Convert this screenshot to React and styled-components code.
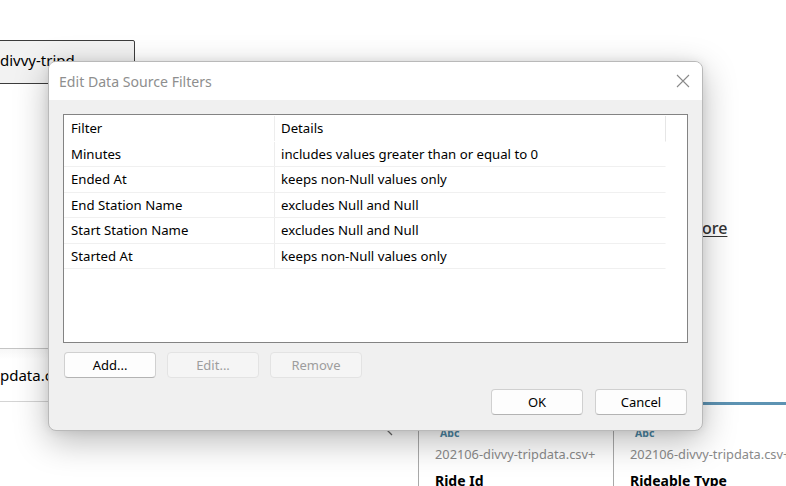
import React from "react";
import styled, { createGlobalStyle } from "styled-components";

const GlobalStyle = createGlobalStyle`
  html, body {
    margin: 0;
    padding: 0;
    background: #ffffff;
  }
  body {
    font-family: "Noto Sans", "Open Sans", sans-serif;
    color: #000;
  }
`;

const Page = styled.div`
  position: relative;
  width: 786px;
  height: 486px;
  overflow: hidden;
  background: #ffffff;
`;

/* ---------- background workbook page ---------- */

const Backdrop = styled.div`
  display: flex;
  flex-direction: column;
  height: 100%;
`;

const TabRow = styled.div`
  display: flex;
  padding-top: 40px;
  margin-left: -12px;
`;

const SourceTab = styled.div`
  width: 147px;
  height: 44px;
  box-sizing: border-box;
  border: 1px solid #3c3c3c;
  border-radius: 2px;
  background: #f2f2f2;
  display: flex;
  align-items: flex-start;
  padding: 9px 0 0 11px;
  font-size: 15px;
  white-space: nowrap;
  overflow: hidden;
`;

const LinkRow = styled.div`
  display: flex;
  padding-left: 702px;
  margin-top: 133px;
  height: 24px;
  align-items: center;
`;

const MoreLink = styled.a`
  font-size: 16px;
  color: #333;
  text-decoration: underline;
  text-underline-offset: 2px;
  font-weight: 500;
  white-space: nowrap;
`;

const ConnectionRow = styled.div`
  display: flex;
  margin-top: 109px;
  margin-left: -40px;
`;

const ConnectionBox = styled.div`
  width: 140px;
  height: 54px;
  box-sizing: border-box;
  border-top: 1px solid #c4c4c4;
  border-bottom: 1px solid #d4d4d4;
  background: linear-gradient(#f7f7f7, #ffffff 20%);
  font-size: 15px;
  display: flex;
  align-items: center;
  padding: 0 0 0 40px;
  white-space: nowrap;
`;

const GridArea = styled.div`
  display: flex;
  flex: 1;
`;

const GridGutter = styled.div`
  width: 418px;
  flex-shrink: 0;
  display: flex;
  justify-content: flex-end;
  align-items: flex-start;
  padding-top: 24px;
  padding-right: 24px;
  box-sizing: border-box;
`;

const GridColumns = styled.div`
  flex: 1;
  min-width: 0;
  display: flex;
  overflow: hidden;
  border-top: 3px solid #5d93b3;
`;

const Column = styled.div`
  width: ${(p) => p.width}px;
  flex-shrink: 0;
  border-left: 1px solid #a9a9a9;
  padding: 21px 0 0 16px;
  box-sizing: border-box;
  display: flex;
  flex-direction: column;
  white-space: nowrap;
  overflow: hidden;
`;

const TypeTag = styled.span`
  font-size: 10.5px;
  font-weight: 700;
  color: #4c86a3;
  padding-left: 5px;
  line-height: 14px;
`;

const SourceName = styled.span`
  font-size: 12.8px;
  color: #8a8a8a;
  margin-top: 6px;
  line-height: 17px;
`;

const FieldName = styled.span`
  font-size: 14px;
  font-weight: 700;
  margin-top: 8px;
`;

/* ---------- dialog ---------- */

const Dialog = styled.div`
  position: absolute;
  left: 48px;
  top: 61px;
  width: 655px;
  height: 370px;
  box-sizing: border-box;
  border: 1px solid #b9b9b9;
  border-radius: 8px;
  overflow: hidden;
  background: #f0f0f0;
  box-shadow: 0 10px 34px rgba(0, 0, 0, 0.28), 0 0 10px rgba(0, 0, 0, 0.08);
  display: flex;
  flex-direction: column;
`;

const TitleBar = styled.div`
  height: 38px;
  background: #ffffff;
  display: flex;
  align-items: center;
  justify-content: space-between;
  padding: 0 12px 0 10px;
`;

const Title = styled.span`
  font-size: 14.1px;
  color: #8e8e8e;
`;

const CloseIcon = styled.svg`
  width: 14px;
  height: 14px;
`;

const Body = styled.div`
  flex: 1;
  display: flex;
  flex-direction: column;
  padding: 14px 14px 0 14px;
`;

const ListView = styled.div`
  height: 229px;
  box-sizing: border-box;
  border: 1px solid #838383;
  background: #ffffff;
  padding: 1px 0 0 0;
`;

const Table = styled.div`
  width: 602px;
  display: flex;
  flex-direction: column;
`;

const Row = styled.div`
  display: grid;
  grid-template-columns: 210px 1fr;
  height: 25.5px;
  align-items: center;
  border-bottom: 1px solid ${(p) => (p.header ? "transparent" : "#f0f0f0")};
  border-right: 1px solid ${(p) => (p.header ? "#e6e6e6" : "transparent")};
  box-sizing: border-box;
  font-size: 13.2px;
`;

const Cell = styled.div`
  height: 100%;
  display: flex;
  align-items: center;
  padding-left: 6px;
  white-space: nowrap;
  box-sizing: border-box;
  border-left: 1px solid ${(p) => (p.divider ? "#ededed" : "transparent")};
`;

const ButtonRow = styled.div`
  display: flex;
  gap: 11px;
  margin-top: 9px;
  padding-left: 1px;
`;

const FooterRow = styled.div`
  display: flex;
  justify-content: flex-end;
  gap: 12px;
  margin-top: 11px;
  padding-right: 1px;
`;

const Button = styled.button`
  width: 92px;
  height: 26px;
  box-sizing: border-box;
  border-radius: 4px;
  font-family: inherit;
  font-size: 13px;
  padding: 0;
  border: 1px solid ${(p) => (p.disabled ? "#e3e3e3" : "#d0d0d0")};
  border-bottom-color: ${(p) => (p.disabled ? "#e3e3e3" : "#b3b3b3")};
  background: ${(p) => (p.disabled ? "#f5f5f5" : "#fdfdfd")};
  color: ${(p) => (p.disabled ? "#9d9d9d" : "#000")};
`;

const filters = [
  ["Minutes", "includes values greater than or equal to 0"],
  ["Ended At", "keeps non-Null values only"],
  ["End Station Name", "excludes Null and Null"],
  ["Start Station Name", "excludes Null and Null"],
  ["Started At", "keeps non-Null values only"],
];

export default function App() {
  return (
    <Page>
      <GlobalStyle />
      <Backdrop>
        <TabRow>
          <SourceTab>divvy-tripd</SourceTab>
        </TabRow>
        <LinkRow>
          <MoreLink>ore</MoreLink>
        </LinkRow>
        <ConnectionRow>
          <ConnectionBox>pdata.c</ConnectionBox>
        </ConnectionRow>
        <GridArea>
          <GridGutter>
            <svg width="8" height="10" viewBox="0 0 8 10">
              <path d="M6 1 L2 5 L6 9" fill="none" stroke="#666" strokeWidth="1.3" />
            </svg>
          </GridGutter>
          <GridColumns>
            <Column width={195}>
              <TypeTag>Abc</TypeTag>
              <SourceName>202106-divvy-tripdata.csv+</SourceName>
              <FieldName>Ride Id</FieldName>
            </Column>
            <Column width={180}>
              <TypeTag>Abc</TypeTag>
              <SourceName>202106-divvy-tripdata.csv+</SourceName>
              <FieldName>Rideable Type</FieldName>
            </Column>
          </GridColumns>
        </GridArea>
      </Backdrop>

      <Dialog>
        <TitleBar>
          <Title>Edit Data Source Filters</Title>
          <CloseIcon viewBox="0 0 14 14">
            <path d="M1 1 L13 13 M13 1 L1 13" stroke="#8a8a8a" strokeWidth="1.1" />
          </CloseIcon>
        </TitleBar>
        <Body>
          <ListView>
            <Table>
              <Row header>
                <Cell>Filter</Cell>
                <Cell divider>Details</Cell>
              </Row>
              {filters.map(([name, detail]) => (
                <Row key={name}>
                  <Cell>{name}</Cell>
                  <Cell divider>{detail}</Cell>
                </Row>
              ))}
            </Table>
          </ListView>
          <ButtonRow>
            <Button>Add...</Button>
            <Button disabled>Edit...</Button>
            <Button disabled>Remove</Button>
          </ButtonRow>
          <FooterRow>
            <Button>OK</Button>
            <Button>Cancel</Button>
          </FooterRow>
        </Body>
      </Dialog>
    </Page>
  );
}
